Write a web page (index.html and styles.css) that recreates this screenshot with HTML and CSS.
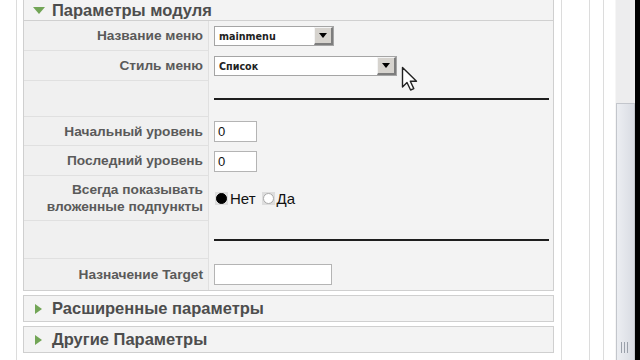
FILE: index.html
```html
<!DOCTYPE html>
<html lang="ru">
<head>
  <meta charset="UTF-8" />
  <title>Параметры модуля</title>
  <link rel="stylesheet" href="styles.css">
</head>
<body>

<div class="window">
  <div class="content">
    <div class="frame">

      <!-- Параметры модуля (open) -->
      <div class="pane open">
        <h3 class="toggler"><span class="arrow-down"></span>Параметры модуля</h3>
        <div class="paramlist">
          <div class="key">Название меню</div>
          <div class="value">
            <span class="select narrow">mainmenu<span class="btn"><span class="tri"></span></span></span>
          </div>

          <div class="key">Стиль меню</div>
          <div class="value">
            <span class="select wide">Список<span class="btn"><span class="tri"></span></span></span>
          </div>

          <div class="key"></div>
          <div class="value"><hr class="spacer"></div>

          <div class="key">Начальный уровень</div>
          <div class="value"><span class="input short">0</span></div>

          <div class="key">Последний уровень</div>
          <div class="value"><span class="input short">0</span></div>

          <div class="key">Всегда показывать<br>вложенные подпункты</div>
          <div class="value">
            <span class="radio checked"></span><span class="radio-label">Нет</span>
            <span class="radio"></span><span class="radio-label">Да</span>
          </div>

          <div class="key"></div>
          <div class="value"><hr class="spacer"></div>

          <div class="key">Назначение Target</div>
          <div class="value"><span class="input long"></span></div>
        </div>
      </div>

      <!-- collapsed panes -->
      <div class="pane">
        <h3 class="toggler"><span class="arrow-right"></span>Расширенные параметры</h3>
      </div>
      <div class="pane">
        <h3 class="toggler"><span class="arrow-right"></span>Другие Параметры</h3>
      </div>

    </div>
    <div class="side">
      <div class="side-col"></div>
    </div>
  </div>

  <div class="scrollbar">
    <div class="thumb"><span class="grip"></span></div>
  </div>
  <div class="edge"></div>
</div>

<svg class="cursor" width="19" height="26" viewBox="0 0 19 26">
  <path d="M1.5 1.5 L1.5 21 L6 16.5 L9.6 24 L12.8 22.6 L9.3 15.2 L15.5 15.2 Z" fill="#fff" stroke="#222" stroke-width="1.4" stroke-linejoin="round"/>
</svg>

</body>
</html>
```

FILE: styles.css
```css
body {
  margin: 0;
  background: #fff;
  font-family: 'Liberation Sans', Arial, sans-serif;
  overflow: hidden;
}
.window {
  display: flex;
  height: 360px;
}
.content {
  display: flex;
  width: 615px;
  padding-left: 16px;
  box-sizing: border-box;
}
.frame {
  width: 546px;
  box-sizing: border-box;
  border-left: 1px solid #dcdcdc;
  border-right: 1px solid #dcdcdc;
  padding: 0 7px 0 6px;
}
.side {
  width: 53px;
}
.side-col {
  margin-left: 27px;
  width: 13px;
  height: 100%;
  border-left: 1px solid #dcdcdc;
  border-right: 1px solid #dcdcdc;
}

/* panes */
.pane {
  border: 1px solid #cfcfcf;
  background: #f3f3f3;
  margin-bottom: 4px;
}
.pane.open {
  margin-top: -8px;
}
.toggler {
  margin: 0;
  height: 25px;
  line-height: 25px;
  font-size: 16.5px;
  font-weight: bold;
  color: #4d4d4d;
  display: flex;
  align-items: center;
}
.open .toggler {
  height: 28px;
  line-height: 20px;
  padding-top: 7px;
  box-sizing: border-box;
  border-bottom: 1px solid #d0d0d0;
}
.arrow-down {
  width: 0;
  height: 0;
  border-left: 6px solid transparent;
  border-right: 6px solid transparent;
  border-top: 7px solid #72a556;
  margin: 0 7px 0 9px;
}
.arrow-right {
  width: 0;
  height: 0;
  border-top: 5px solid transparent;
  border-bottom: 5px solid transparent;
  border-left: 7px solid #72a556;
  margin: 0 10px 0 11px;
}

/* parameter list */
.paramlist {
  display: grid;
  grid-template-columns: 185px 1fr;
  grid-template-rows: 30px 30px 36px 29px 30px 45px 38px 31px;
}
.key {
  background: #f0f0f0;
  border-right: 1px solid #e0e0e0;
  border-bottom: 1px solid #e0e0e0;
  display: flex;
  align-items: center;
  justify-content: flex-end;
  text-align: right;
  padding-right: 5px;
  font-size: 13.7px;
  line-height: 17px;
  font-weight: bold;
  color: #5a5a5a;
}
.paramlist .key:nth-last-child(2) {
  border-bottom: none;
}
.value {
  display: flex;
  align-items: center;
  padding: 0 4px 0 5px;
  font-size: 13px;
  color: #111;
}
hr.spacer {
  width: 100%;
  margin: 0;
  border: none;
  border-top: 2px solid #1e1e1e;
}

/* fake select */
.select {
  position: relative;
  display: flex;
  align-items: center;
  height: 20px;
  box-sizing: border-box;
  border: 1px solid #a5a5a5;
  background: #fff;
  padding-left: 4px;
  font-family: 'DejaVu Sans', Verdana, sans-serif;
  font-size: 9.6px;
  font-weight: bold;
  color: #222;
}
.select.narrow { width: 120px; }
.select.wide { width: 183px; }
.btn {
  margin-left: auto;
  width: 19px;
  height: 18px;
  box-sizing: border-box;
  background: #d6d3ce;
  border-top: 1px solid #f4f4f4;
  border-left: 1px solid #f4f4f4;
  border-right: 2px solid #7d7d7d;
  border-bottom: 2px solid #7d7d7d;
  display: flex;
  align-items: center;
  justify-content: center;
}
.tri {
  width: 0;
  height: 0;
  border-left: 4px solid transparent;
  border-right: 4px solid transparent;
  border-top: 5px solid #000;
}

/* inputs */
.input {
  height: 21px;
  box-sizing: border-box;
  border: 1px solid #b4b4b4;
  background: #fff;
  padding-left: 3px;
  font-size: 13px;
  line-height: 19px;
  color: #111;
}
.input.short { width: 43px; }
.input.long { width: 118px; }

/* radios */
.radio {
  width: 13px;
  height: 13px;
  box-sizing: border-box;
  background: #ddd;
  padding: 1px;
  display: inline-flex;
  margin-left: 1px;
}
.radio::before {
  content: "";
  flex: 1;
  border-radius: 50%;
  background: #fff;
  border: 1px solid #aaa;
}
.radio.checked::before {
  background: #000;
  border-color: #000;
}
.radio-label {
  font-size: 15px;
  margin: 0 5px 0 2px;
}

/* scrollbar */
.scrollbar {
  width: 20px;
  background: #ededee;
  border-left: 1px solid #f6f6f6;
  box-sizing: border-box;
  padding-top: 103px;
}
.thumb {
  height: 260px;
  box-sizing: border-box;
  border: 1px solid #c3c6cc;
  background: linear-gradient(to right, #eceef2, #d9dce3);
  position: relative;
}
.grip {
  position: absolute;
  left: 4px;
  top: 238px;
  width: 9px;
  height: 11px;
  background: repeating-linear-gradient(to right, #9aa0aa 0 1px, transparent 1px 3px);
}
.edge {
  width: 5px;
  background: #000;
}

.cursor {
  position: absolute;
  left: 401px;
  top: 66px;
}
```
